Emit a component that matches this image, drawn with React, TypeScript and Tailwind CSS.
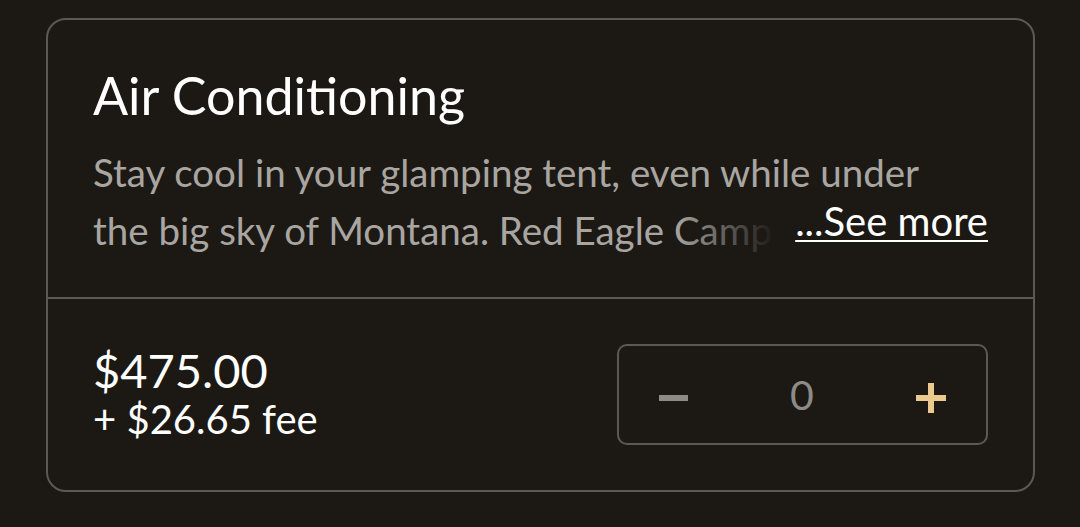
import { ReactElement, useState } from 'react';

const font = { fontFamily: '"Lato", "Noto Sans", sans-serif' };

function Stepper(): ReactElement {
  const [count, setCount] = useState(0);
  return (
    <div className="flex h-[101px] w-[371px] items-center justify-between rounded-[10px] border-2 border-[#5c5955] px-[40px]">
      <button
        className="flex h-10 w-[29px] translate-y-[3px] items-center justify-center"
        onClick={() => setCount(Math.max(0, count - 1))}
        aria-label="Decrease"
      >
        <span className="block h-[6px] w-[29px] bg-[#8e8b87]" />
      </button>
      <span className="text-[41px] leading-none text-[#8e8b87]">{count}</span>
      <button
        className="relative flex h-10 w-[30px] translate-y-[3px] items-center justify-center"
        onClick={() => setCount(count + 1)}
        aria-label="Increase"
      >
        <span className="absolute h-[6px] w-[30px] bg-[#ecc98c]" />
        <span className="absolute h-[30px] w-[6px] bg-[#ecc98c]" />
      </button>
    </div>
  );
}

export default function App(): ReactElement {
  return (
    <div className="min-h-screen bg-[#1c1915] pt-[18px] pl-[46px]" style={font}>
      <div className="w-[989px] rounded-[20px] border-2 border-[#5c5955] bg-[#1c1915]">
        <section className="h-[277px] px-[45px] pt-[49px]">
          <h2 className="text-[52px] leading-[52px] font-normal text-white">Air Conditioning</h2>
          <div className="relative mt-[22px] h-[116px] overflow-hidden">
            <p className="w-[860px] text-[38.5px] leading-[58px] text-[#a9a6a2]">
              Stay cool in your glamping tent, even while under the big sky of Montana. Red Eagle
              Campground offers portable air conditioning units for every tent.
            </p>
            <div className="absolute right-0 bottom-0 flex h-[58px] items-start">
              <div className="h-full w-[100px] bg-gradient-to-r from-transparent to-[#1c1915]" />
              <a
                href="#"
                className="h-full bg-[#1c1915] pl-[20px] text-[40px] leading-[40px] text-white underline decoration-2 underline-offset-[4px]"
              >
                ...See more
              </a>
            </div>
          </div>
        </section>
        <div className="h-[2px] bg-[#5c5955]" />
        <section className="flex h-[191px] items-center justify-between px-[45px]">
          <div className="text-white">
            <div className="text-[47px] leading-[50px]">$475.00</div>
            <div className="text-[40px] leading-[49px]">+ $26.65 fee</div>
          </div>
          <Stepper />
        </section>
      </div>
    </div>
  );
}
